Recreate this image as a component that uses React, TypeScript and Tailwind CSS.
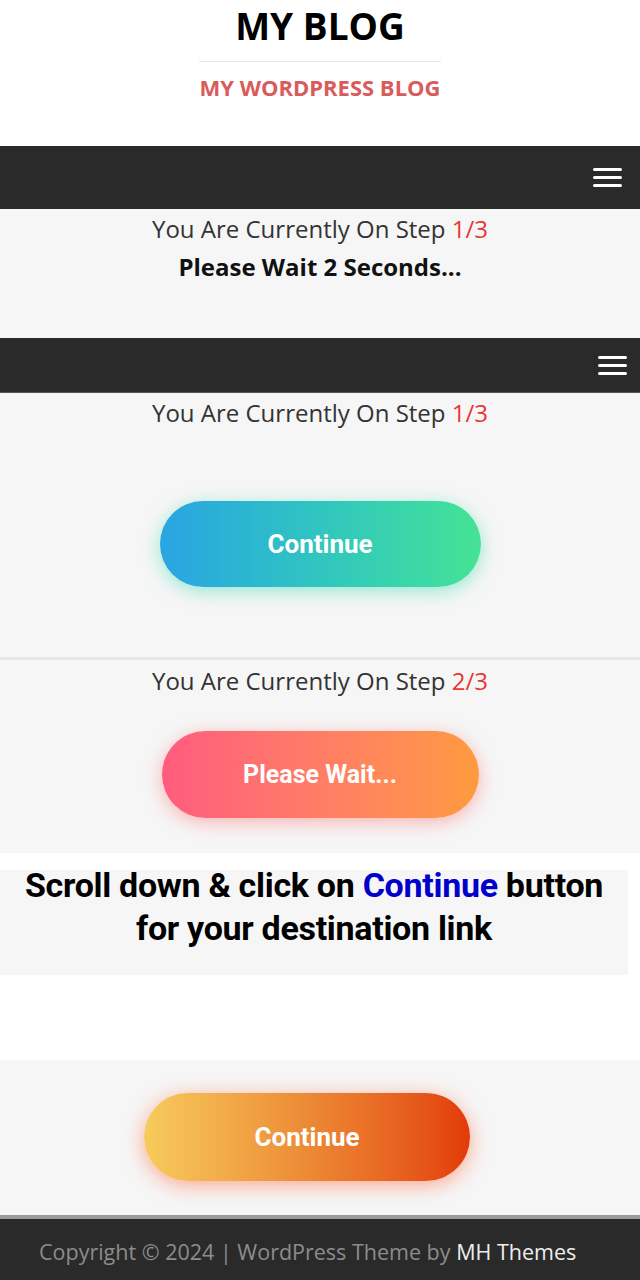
import React from "react";

const Burger = () => (
  <div className="flex flex-col gap-[5px] w-[29px]">
    <div className="h-[3px] bg-white rounded-sm" />
    <div className="h-[3px] bg-white rounded-sm" />
    <div className="h-[3px] bg-white rounded-sm" />
  </div>
);

const Step = ({ n }: { n: string }) => (
  <p className="text-[24px] leading-[30px] text-[#333]">
    You Are Currently On Step <span className="text-[#e53935]">{n}</span>
  </p>
);

export default function App() {
  const os = { fontFamily: '"Open Sans", sans-serif' };
  const rb = { fontFamily: "Roboto, sans-serif" };
  return (
    <div className="w-[640px] h-[1280px] bg-white overflow-hidden" style={os}>
      {/* header */}
      <header className="h-[146px] flex flex-col items-center pt-[3px]">
        <h1 className="text-[37px] leading-[46px] font-bold text-black">MY BLOG</h1>
        <div className="w-[242px] h-px bg-[#e8e8e8] mt-[12px]" />
        <p className="text-[22px] leading-[28px] font-bold text-[#d95b5b] mt-[11px]">MY WORDPRESS BLOG</p>
      </header>

      <div className="h-[63px] bg-[#2a2a2a] flex items-center justify-end pr-[18px]">
        <Burger />
      </div>

      <section className="h-[129px] bg-[#f6f6f6] flex flex-col items-center pt-[5px]">
        <Step n="1/3" />
        <p className="text-[24px] leading-[30px] font-bold text-[#111] mt-[8px]">Please Wait 2 Seconds...</p>
      </section>

      <div className="h-[55px] bg-[#2a2a2a] border-b border-[#555] flex items-center justify-end pr-[13px]">
        <Burger />
      </div>

      <section className="h-[264px] bg-[#f6f6f6] flex flex-col items-center pt-[5px]">
        <Step n="1/3" />
        <button
          className="mt-[73px] w-[321px] h-[86px] rounded-full text-white text-[26px] font-bold bg-gradient-to-r from-[#2aa4e2] to-[#45e393] shadow-[0_4px_18px_rgba(64,220,180,0.55)]"
          style={rb}
        >
          Continue
        </button>
      </section>
      <div className="h-[3px] bg-[#e6e6e6]" />

      <section className="h-[193px] bg-[#f6f6f6] flex flex-col items-center pt-[6px]">
        <Step n="2/3" />
        <button
          className="mt-[35px] w-[317px] h-[87px] rounded-full text-white text-[25px] font-bold bg-gradient-to-r from-[#ff5b7e] to-[#ff9a3e] shadow-[0_4px_18px_rgba(255,110,110,0.5)]"
          style={rb}
        >
          Please Wait...
        </button>
      </section>

      <div className="h-[17px] bg-white" />
      <div className="w-[628px] h-[105px] bg-[#f6f6f6] flex flex-col items-center" style={rb}>
        <p className="text-[34px] leading-[43px] font-bold text-black text-center -mt-[6px] tracking-[-0.3px]">
          Scroll down &amp; click on <span className="text-[#0000cc]">Continue</span> button
          <br />
          for your destination link
        </p>
      </div>
      <div className="h-[85px] bg-white" />

      <section className="h-[155px] bg-[#f6f6f6] flex flex-col items-start pl-[144px] pt-[33px]">
        <button
          className="w-[326px] h-[88px] rounded-full text-white text-[26px] font-bold bg-gradient-to-r from-[#f6cb5c] via-[#ec8a35] to-[#e23a08] shadow-[0_4px_20px_rgba(255,90,40,0.5)]"
          style={rb}
        >
          Continue
        </button>
      </section>

      <footer className="h-[65px] bg-[#2a2a2a] border-t-[4px] border-[#9a9a9a] flex items-center justify-start pl-[39px]">
        <p className="text-[21.5px] text-[#8c8c8c] mt-[6px] whitespace-nowrap">
          Copyright © 2024 | WordPress Theme by <span className="text-[#eeeeee]">MH Themes</span>
        </p>
      </footer>
    </div>
  );
}
